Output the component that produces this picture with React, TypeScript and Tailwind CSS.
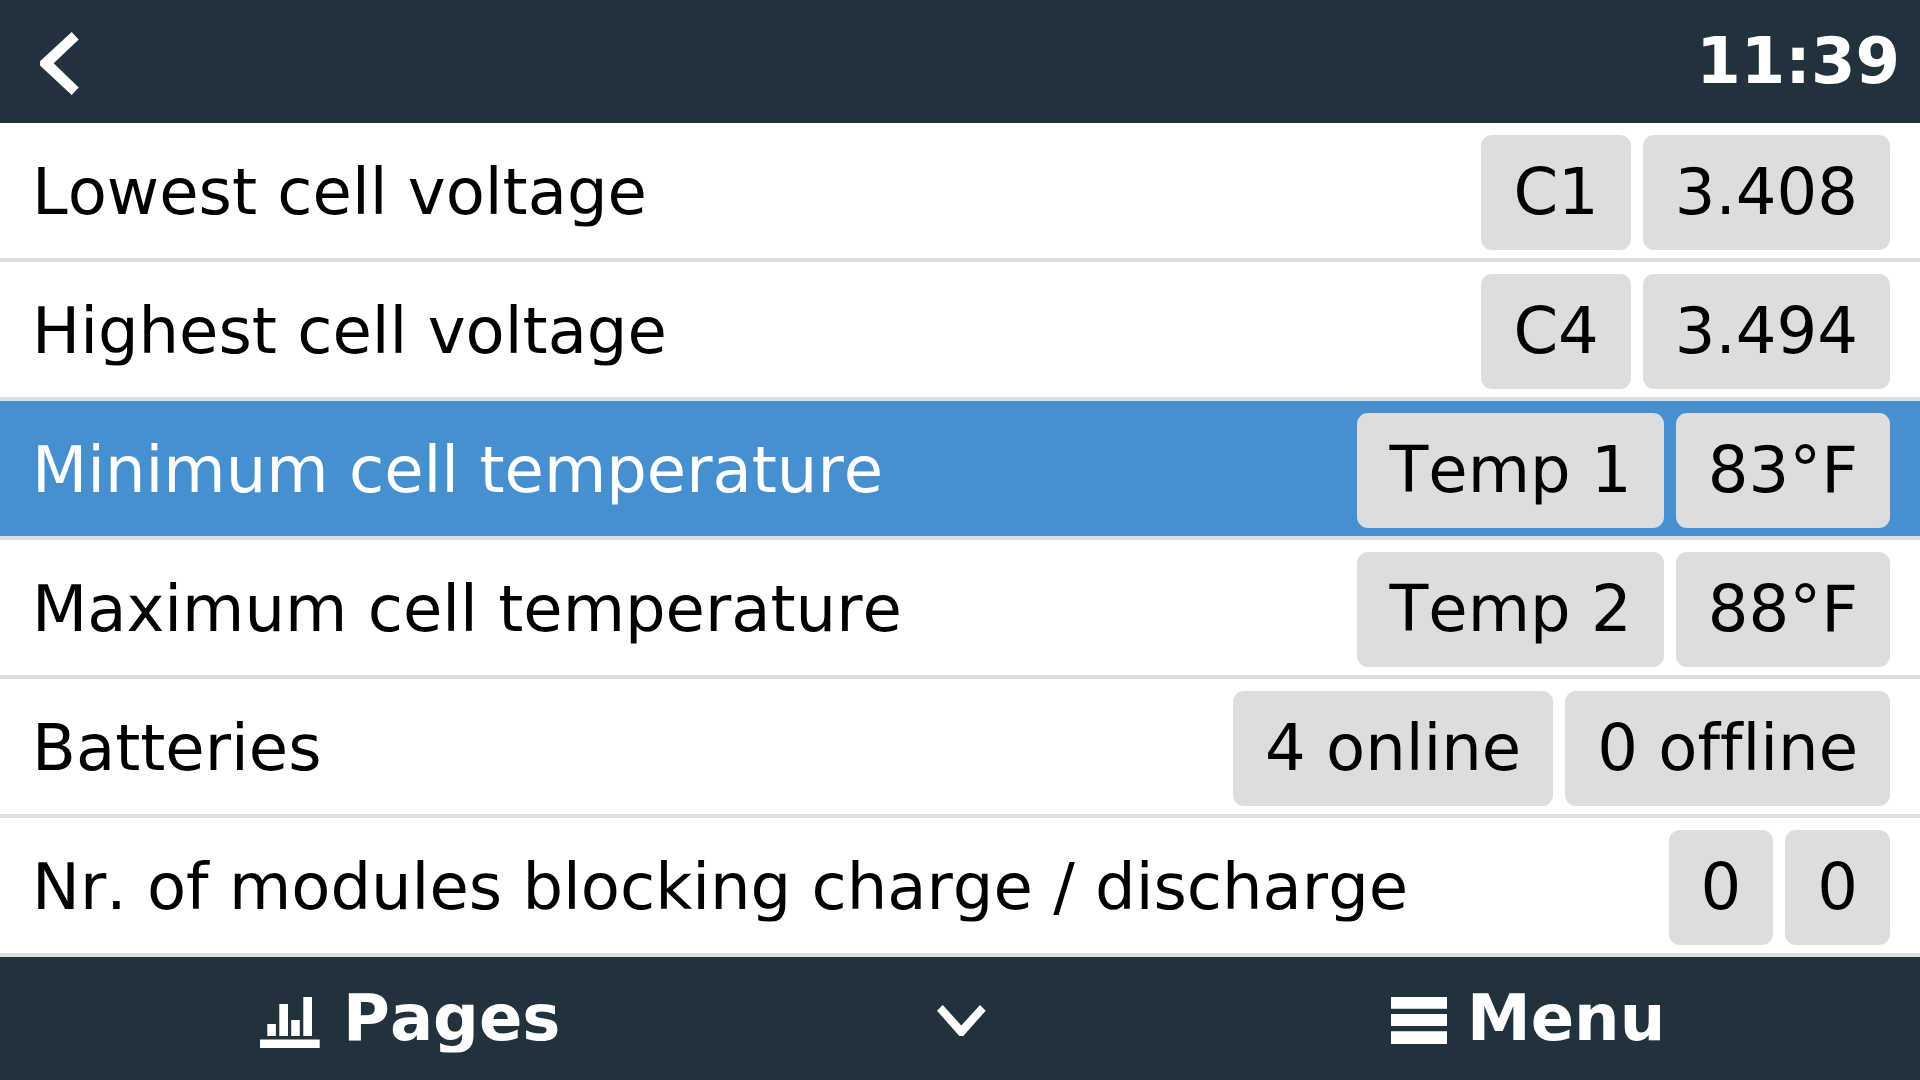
import clsx from "clsx";

type Row = {
  label: string;
  values: string[];
  selected?: boolean;
};

const rows: Row[] = [
  { label: "Lowest cell voltage", values: ["C1", "3.408"] },
  { label: "Highest cell voltage", values: ["C4", "3.494"] },
  {
    label: "Minimum cell temperature",
    values: ["Temp 1", "83°F"],
    selected: true,
  },
  { label: "Maximum cell temperature", values: ["Temp 2", "88°F"] },
  { label: "Batteries", values: ["4 online", "0 offline"] },
  {
    label: "Nr. of modules blocking charge / discharge",
    values: ["0", "0"],
  },
];

function BackIcon() {
  return (
    <svg width="39" height="63" viewBox="0 0 39 63" fill="currentColor">
      <path d="M31.7 0 38.7 7.5 13.7 31.3 38.7 55.5 31.7 63 0 33.5V29.2Z" />
    </svg>
  );
}

function PagesIcon() {
  return (
    <svg width="60" height="51" viewBox="0 0 60 51" fill="currentColor">
      <path d="M7.3 27h8.6v12H7.3zM19.3 7H28v32h-8.7zM31.2 23h8.6v16h-8.6zM43.3 0H52v39h-8.7zM0 42.5h59.7V51H0z" />
    </svg>
  );
}

function DownIcon() {
  return (
    <svg width="49" height="31" viewBox="0 0 49 31" fill="currentColor">
      <path d="M0 5.7 5.7 0 24.3 20.5 43 0 48.7 5.7 26.3 31H22.3Z" />
    </svg>
  );
}

function MenuIcon() {
  return (
    <svg width="56" height="47" viewBox="0 0 56 47" fill="currentColor">
      <path d="M0 0h56v11.7H0zM0 17h56v12H0zM0 34.3h56V47H0z" />
    </svg>
  );
}

function Text({ children }: { children: React.ReactNode }) {
  return (
    <span className="mb-0.5 leading-[74px] [clip-path:inset(0_0_2px)]">
      {children}
    </span>
  );
}

function ValueBadge({ children }: { children: React.ReactNode }) {
  return (
    <div className="flex h-[115px] items-center rounded-[11px] bg-[#ddd] px-8 text-black">
      <Text>{children}</Text>
    </div>
  );
}

function ListRow({ label, values, selected }: Row) {
  return (
    <li
      className={clsx(
        "flex h-[139px] items-center justify-between border-b-4 border-[#ddd] pt-3 pr-[30px] pb-2 pl-8",
        selected ? "bg-[#4790d0] text-white" : "bg-white text-black",
      )}
    >
      <Text>{label}</Text>
      <div className="flex gap-3">
        {values.map((value, i) => (
          <ValueBadge key={i}>{value}</ValueBadge>
        ))}
      </div>
    </li>
  );
}

export default function App() {
  return (
    <div className="flex h-[1080px] w-[1920px] flex-col overflow-hidden bg-white font-['DejaVu_Sans',sans-serif] text-[64px] whitespace-nowrap [font-kerning:none] [font-variant-ligatures:none]">
      <header className="flex h-[123px] items-center justify-between bg-[#22323c] pr-5 pl-10 text-white">
        <button aria-label="Back" className="mt-1">
          <BackIcon />
        </button>
        <div className="flex font-bold">
          <Text>11:39</Text>
        </div>
      </header>
      <ul>
        {rows.map((row) => (
          <ListRow key={row.label} {...row} />
        ))}
      </ul>
      <footer className="flex h-[123px] items-center bg-[#22323c] text-white">
        <button className="flex w-[937px] items-center gap-[23px] pl-[260px] font-bold">
          <span className="pt-2">
            <PagesIcon />
          </span>
          <Text>Pages</Text>
        </button>
        <button aria-label="Scroll down" className="pt-1">
          <DownIcon />
        </button>
        <button className="flex items-center gap-5 pl-[405px] font-bold">
          <span className="pt-1">
            <MenuIcon />
          </span>
          <Text>Menu</Text>
        </button>
      </footer>
    </div>
  );
}
